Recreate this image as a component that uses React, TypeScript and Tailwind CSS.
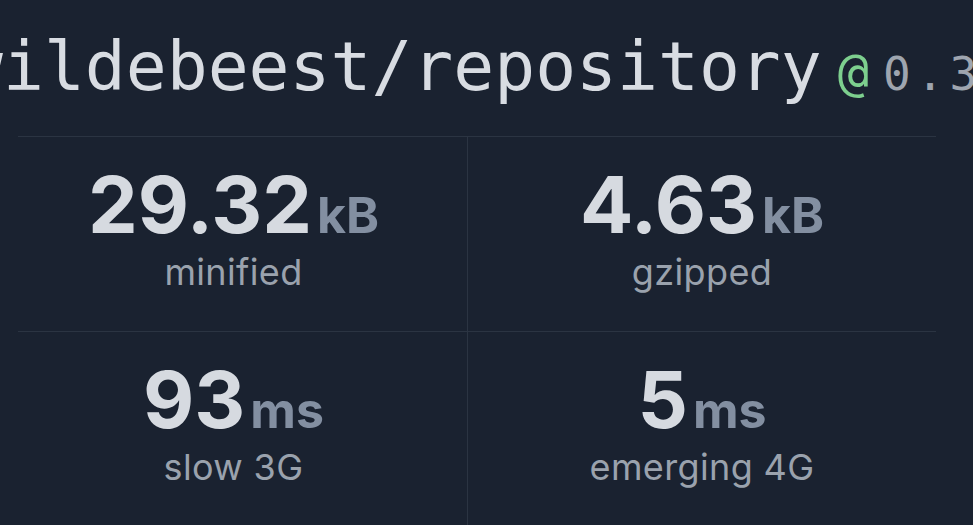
const stats = [
  [
    { value: '29.32', unit: 'kB', label: 'minified' },
    { value: '4.63', unit: 'kB', label: 'gzipped' },
  ],
  [
    { value: '93', unit: 'ms', label: 'slow 3G' },
    { value: '5', unit: 'ms', label: 'emerging 4G' },
  ],
]

function StatCell({ value, unit, label }: { value: string; unit: string; label: string }) {
  return (
    <div className="flex h-[194px] flex-col items-center pt-[28px]">
      <div className="flex items-baseline leading-none">
        <span className="text-[79px] font-bold leading-none text-[#d6dae0]">{value}</span>
        <span className="ml-[5px] text-[50px] font-bold leading-none text-[#838fa1]">{unit}</span>
      </div>
      <div className="mt-[10px] text-[36px] leading-none tracking-[0.01em] text-[#9aa2ad]">{label}</div>
    </div>
  )
}

export default function App() {
  return (
    <div className="h-[525px] w-[973px] overflow-hidden bg-[#1a2230] font-['Inter',sans-serif]">
      {/* package name */}
      <div className="ml-[-38px] h-[68px] whitespace-nowrap pt-[33px] font-['DejaVu_Sans_Mono',monospace] leading-none box-content">
        <span className="text-[68px] leading-none text-[#d8dce2]">wildebeest/repository</span>
        <span className="ml-[16px] text-[52px] leading-none text-[#7dcf8e]">@</span>
        <span className="ml-[14px] text-[46px] leading-none tracking-[0.12em] text-[#9ea5af]">0.3.1</span>
      </div>

      {/* stats grid */}
      <div className="mt-[35px] grid w-[936px] grid-cols-2">
        {[0, 1].map((col) => (
          <div key={col} className={col === 0 ? 'border-r border-[#2b3442]' : ''}>
            {stats.map((row, i) => (
              <div key={i}>
                <div className={`h-px bg-[#2b3442] ${col === 0 ? 'ml-[18px]' : ''}`} />
                <StatCell {...row[col]} />
              </div>
            ))}
          </div>
        ))}
      </div>
    </div>
  )
}
